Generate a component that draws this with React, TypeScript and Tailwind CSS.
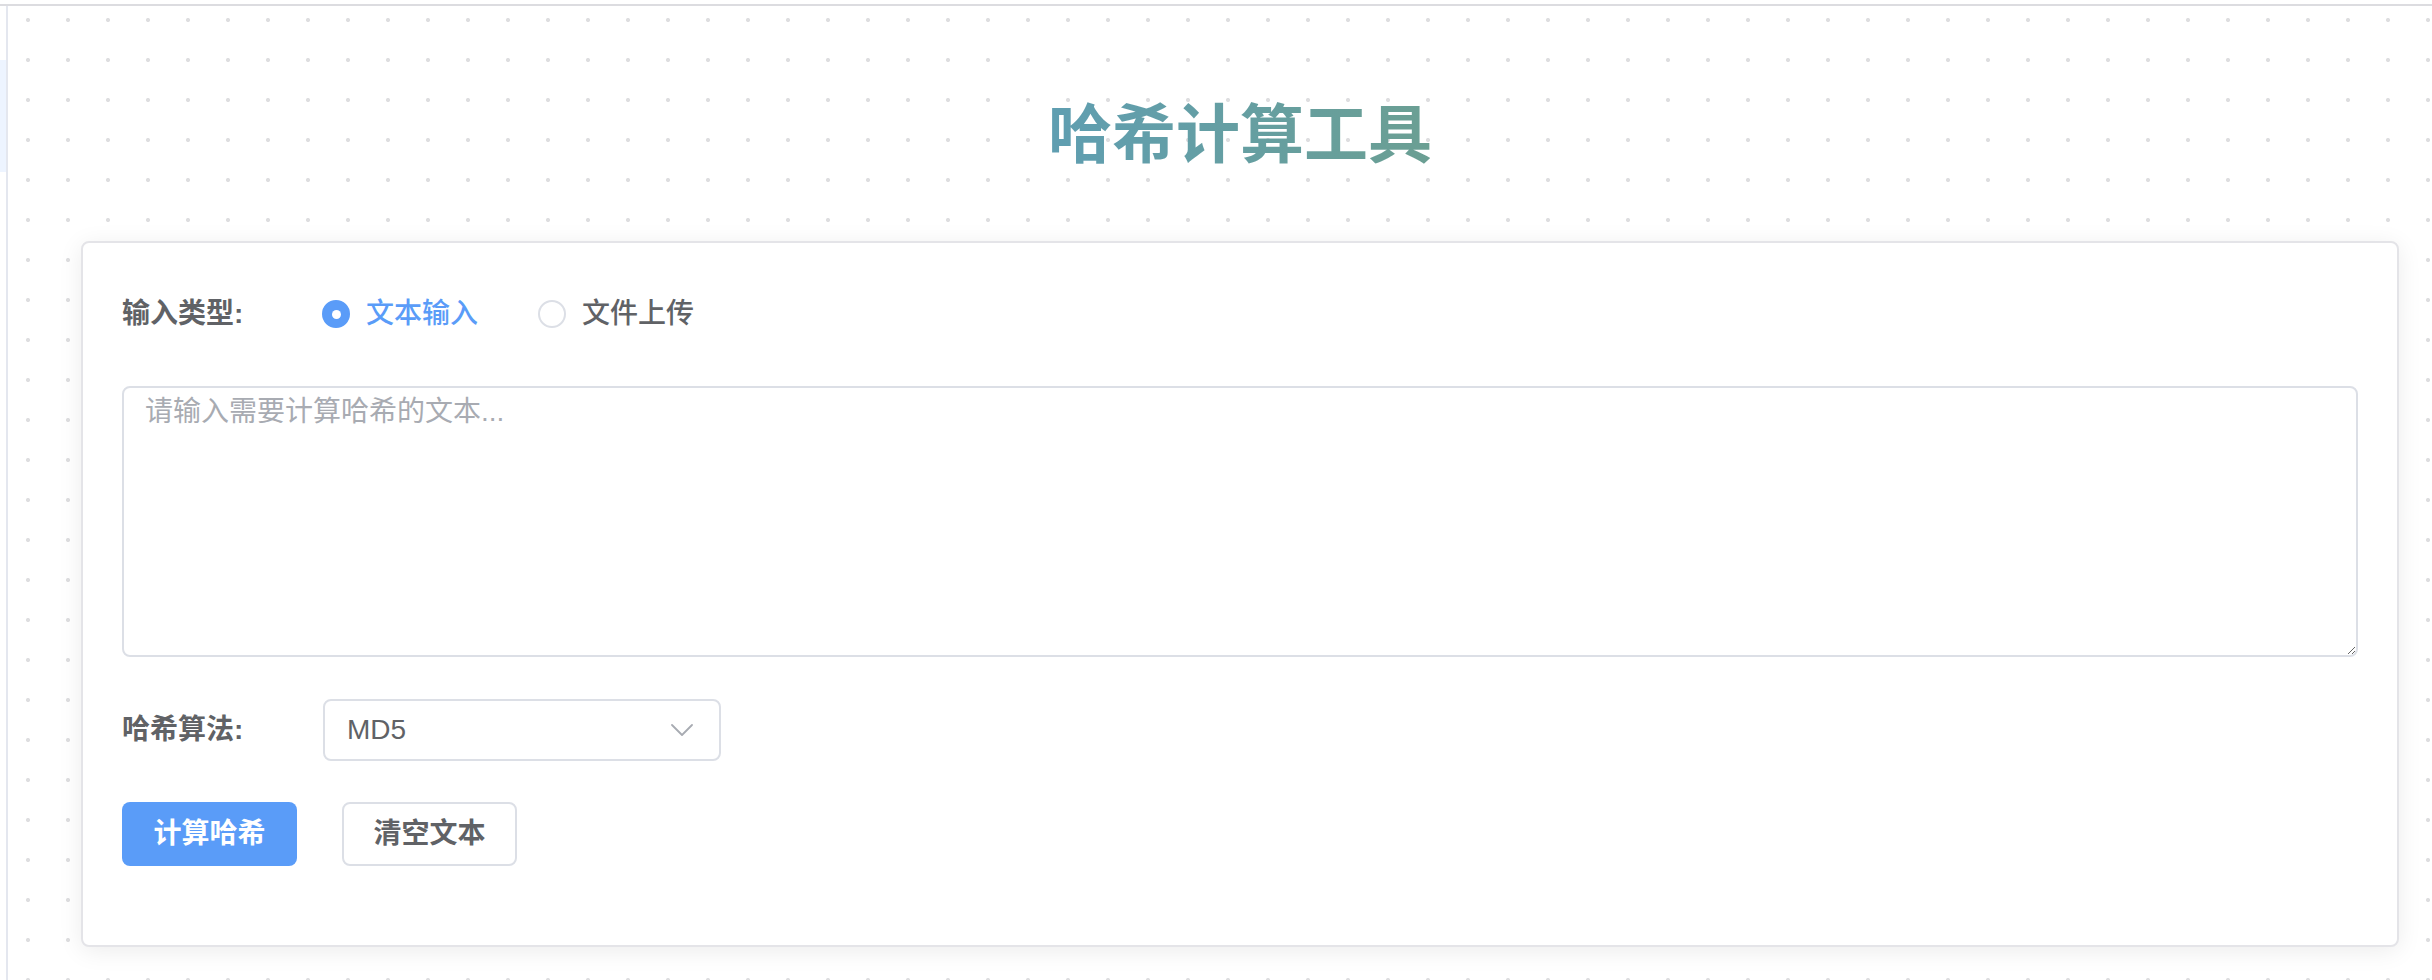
import { useState } from "react";

const FONT = {
  fontFamily: '"Liberation Sans", "Noto Sans CJK SC", sans-serif',
};

function Radio({
  label,
  checked,
  onClick,
}: {
  label: string;
  checked: boolean;
  onClick: () => void;
}) {
  return (
    <label
      onClick={onClick}
      className="flex items-center mr-[60px] cursor-pointer select-none"
    >
      <span
        className={`w-[28px] h-[28px] rounded-full flex items-center justify-center shrink-0 ${
          checked
            ? "bg-[#5a9cf8] border-2 border-[#5a9cf8]"
            : "bg-white border-2 border-[#dcdfe6]"
        }`}
      >
        {checked && <span className="w-[9px] h-[9px] rounded-full bg-white" />}
      </span>
      <span
        className={`ml-[16px] text-[28px] font-medium leading-none ${
          checked ? "text-[#5a9cf8]" : "text-[#606266]"
        }`}
      >
        {label}
      </span>
    </label>
  );
}

export default function App() {
  const [mode, setMode] = useState<"text" | "file">("text");
  const [text, setText] = useState("");

  return (
    <div
      style={FONT}
      className="h-[980px] w-full flex flex-col overflow-hidden bg-white bg-[radial-gradient(circle,#dedee0_2px,transparent_2.2px)] bg-[size:40px_40px] bg-[position:8px_0]"
    >
      {/* top edge */}
      <div className="h-[6px] shrink-0 bg-white border-b-2 border-[#dcdce0]" />

      <div className="flex flex-1 min-h-0">
        {/* collapsed side rail */}
        <aside className="w-[8px] shrink-0 bg-white border-r-2 border-[#e4e7ef]">
          <div className="mt-[54px] h-[112px] w-[6px] bg-[#edf4ff]" />
        </aside>

        <main className="flex-1 pl-[73px] pr-[33px] pt-[81px]">
          <h1 className="text-center text-[64px] leading-[96px] font-bold mb-[58px]">
            <span className="bg-[linear-gradient(90deg,#5f9eb1,#6b9f93)] bg-clip-text text-transparent">
              哈希计算工具
            </span>
          </h1>

          <div className="bg-white border-2 border-[#e4e4e8] rounded-[8px] shadow-[0_4px_24px_rgba(0,0,0,0.08)] px-[39px] pt-[39px] pb-[79px]">
            {/* input type */}
            <div className="flex items-center h-[64px]">
              <span className="w-[200px] shrink-0 text-[28px] font-semibold text-[#606266]">
                输入类型:
              </span>
              <div className="flex items-center">
                <Radio
                  label="文本输入"
                  checked={mode === "text"}
                  onClick={() => setMode("text")}
                />
                <Radio
                  label="文件上传"
                  checked={mode === "file"}
                  onClick={() => setMode("file")}
                />
              </div>
            </div>

            {/* text area */}
            <textarea
              value={text}
              onChange={(e) => setText(e.target.value)}
              placeholder="请输入需要计算哈希的文本..."
              style={FONT}
              className="mt-[40px] block w-full h-[271px] border-2 border-[#dcdfe6] rounded-[8px] px-[21px] py-[3px] text-[28px] leading-[42px] text-[#606266] placeholder:text-[#a8abb2] outline-none resize-y"
            />

            {/* algorithm */}
            <div className="mt-[42px] flex items-center h-[62px]">
              <span className="w-[201px] shrink-0 text-[28px] font-semibold text-[#606266]">
                哈希算法:
              </span>
              <div className="w-[398px] h-[62px] border-2 border-[#dcdfe6] rounded-[8px] pl-[22px] pr-[26px] flex items-center justify-between cursor-pointer">
                <span className="text-[28px] text-[#606266]">MD5</span>
                <svg width="22" height="12" viewBox="0 0 22 12" fill="none">
                  <path
                    d="M1 1l10 10L21 1"
                    stroke="#a8abb2"
                    strokeWidth="1.8"
                    strokeLinecap="round"
                    strokeLinejoin="round"
                  />
                </svg>
              </div>
            </div>

            {/* actions */}
            <div className="mt-[41px] flex items-center">
              <button className="w-[175px] h-[64px] rounded-[8px] bg-[#5a9cf8] text-white text-[28px] font-semibold">
                计算哈希
              </button>
              <button
                onClick={() => setText("")}
                className="ml-[45px] w-[175px] h-[64px] rounded-[8px] bg-white border-2 border-[#dcdfe6] text-[#606266] text-[28px] font-semibold"
              >
                清空文本
              </button>
            </div>
          </div>
        </main>
      </div>
    </div>
  );
}
